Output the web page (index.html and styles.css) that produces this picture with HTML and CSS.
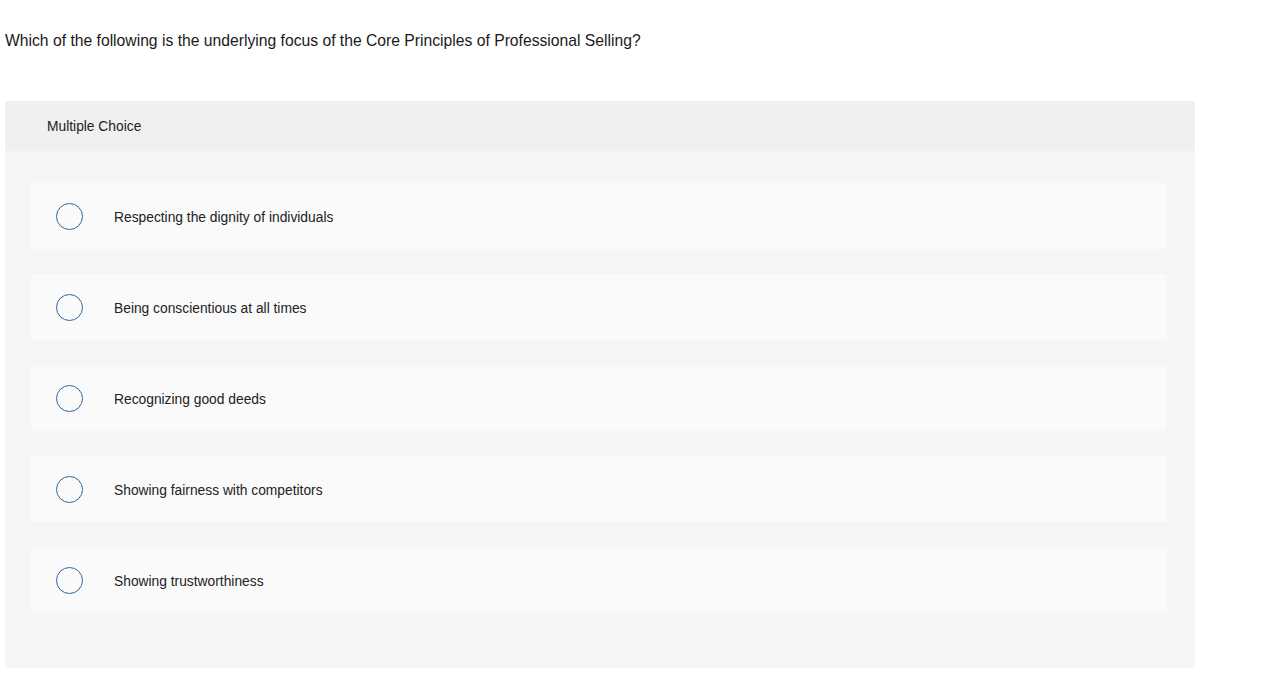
FILE: index.html
```html
<!DOCTYPE html>
<html>
<head>
<meta charset="utf-8">
<link rel="stylesheet" href="styles.css">
</head>
<body>
<p class="question">Which of the following is the underlying focus of the Core Principles of Professional Selling?</p>
<section class="mc">
  <div class="mc-head">Multiple Choice</div>
  <div class="mc-body">
    <label class="opt"><span class="radio"></span><span class="opt-text">Respecting the dignity of individuals</span></label>
    <label class="opt"><span class="radio"></span><span class="opt-text">Being conscientious at all times</span></label>
    <label class="opt"><span class="radio"></span><span class="opt-text">Recognizing good deeds</span></label>
    <label class="opt"><span class="radio"></span><span class="opt-text">Showing fairness with competitors</span></label>
    <label class="opt"><span class="radio"></span><span class="opt-text">Showing trustworthiness</span></label>
  </div>
</section>
</body>
</html>
```
FILE: styles.css
```css
html, body { margin: 0; padding: 0; background: #fff; }
body {
  font-family: "Liberation Sans", Arial, sans-serif;
  color: #222;
  padding: 0 68px 0 5px;
}
.question {
  margin: 0;
  padding-top: 31px;
  height: 101px;
  box-sizing: border-box;
  font-size: 15.7px;
  line-height: 19px;
  color: #1a1a1a;
}
.mc {
  width: 1190px;
  background: #f5f5f5;
  border-radius: 3px;
  overflow: hidden;
}
.mc-head {
  height: 50px;
  background: #f0f0f0;
  display: flex;
  align-items: center;
  padding-left: 42px;
  padding-top: 1px;
  box-sizing: border-box;
  font-size: 13.8px;
  color: #222;
}
.mc-body {
  display: flex;
  flex-direction: column;
  gap: 25px;
  padding: 32px 28px 55px 26px;
}
.opt {
  height: 66px;
  background: #fafafa;
  border-radius: 3px;
  display: flex;
  align-items: center;
  padding-left: 25px;
}
.radio {
  width: 25px;
  height: 25px;
  border: 1.5px solid #2b65a0;
  border-radius: 50%;
  flex: none;
}
.opt-text {
  margin-left: 31px;
  padding-top: 2px;
  font-size: 13.8px;
  color: #222;
}
```
